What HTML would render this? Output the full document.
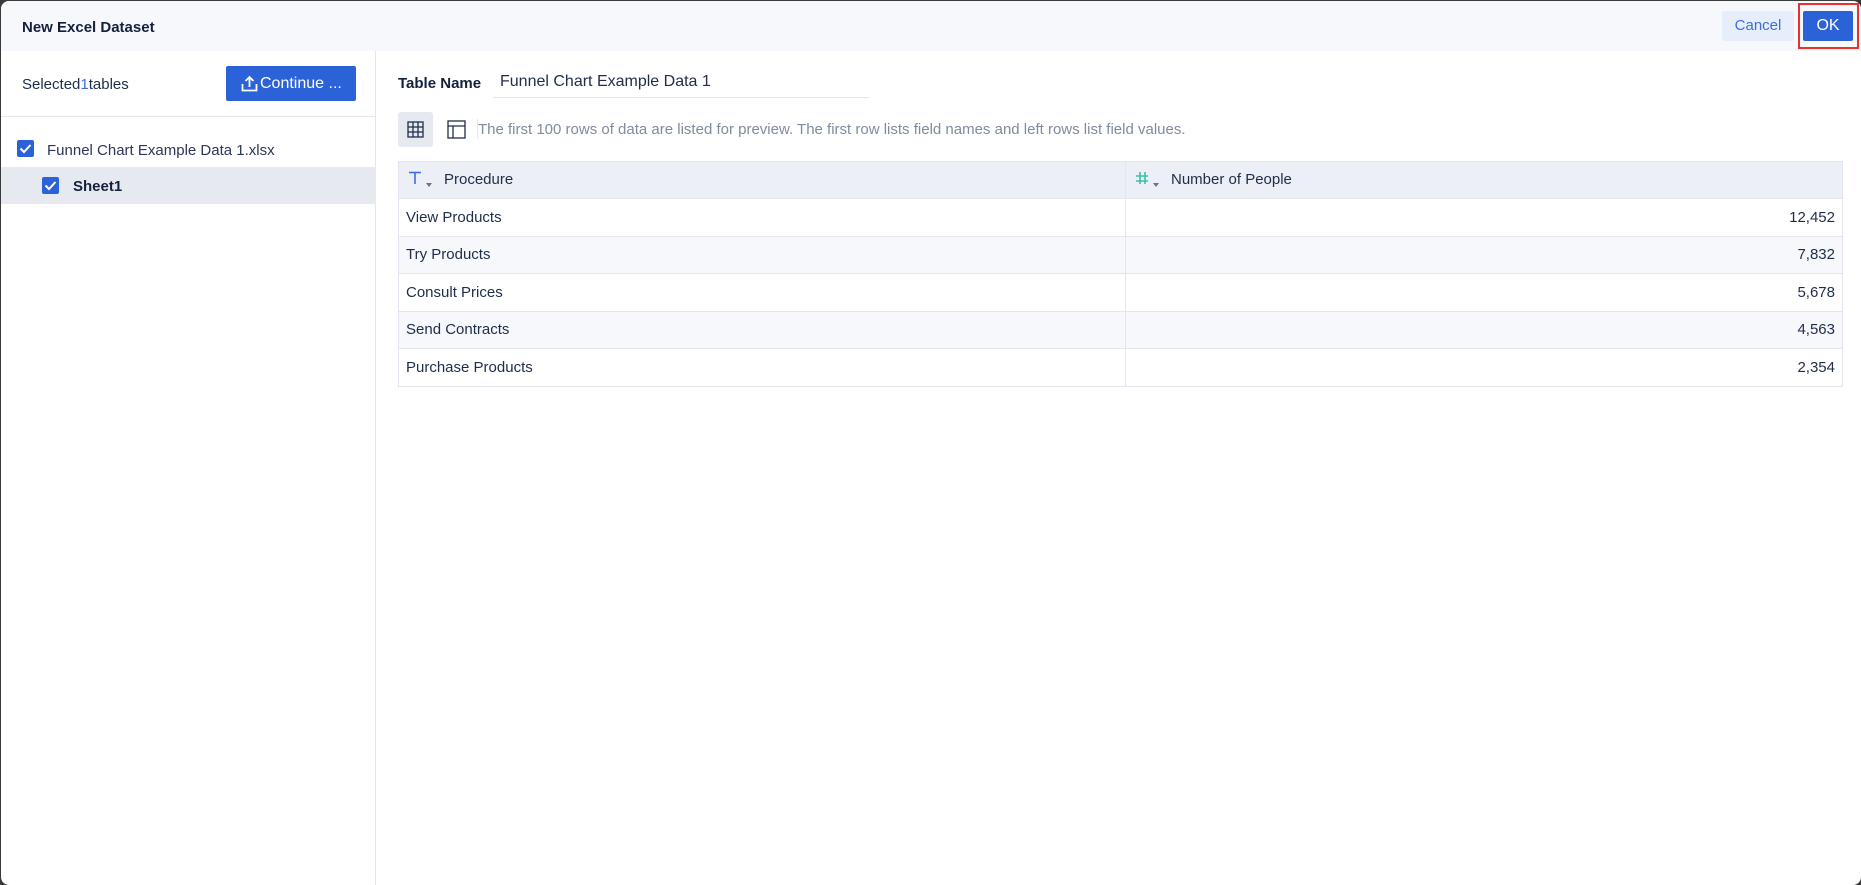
<!DOCTYPE html>
<html><head><meta charset="utf-8"><style>
*{box-sizing:border-box;margin:0;padding:0}
html,body{width:1861px;height:885px;overflow:hidden;background:#3a3a3a;font-family:"Liberation Sans",Arial,sans-serif;color:#1f2d4a}
.dlg{position:absolute;left:1px;top:1px;width:1860px;height:884px;background:#fff;border-radius:8px;overflow:hidden}
.hdr{position:absolute;left:0;top:0;width:100%;height:50px;background:#f6f8fc}
.title{position:absolute;left:21px;top:18px;font-size:15px;font-weight:bold;color:#14213d}
.cancel{position:absolute;left:1721px;top:10px;width:72px;height:30px;background:#e6eefc;color:#3b6fe0;border-radius:2px;font-size:15px;line-height:30px;text-align:center}
.ok{position:absolute;left:1802px;top:10px;width:50px;height:30px;background:#2c62d8;color:#fff;border-radius:2px;font-size:16px;line-height:30px;text-align:center}
.red{position:absolute;left:1797px;top:2px;width:61px;height:46px;border:2px solid #e8312f}
.left{position:absolute;left:0;top:50px;width:375px;height:834px;border-right:1px solid #e3e6ee}
.sel{position:absolute;left:21px;top:25px;font-size:15px;color:#1f2d4a}
.sel b{font-weight:normal;color:#3b6fe0}
.cont{position:absolute;left:225px;top:15px;width:130px;height:35px;background:#2c62d8;border-radius:2px;color:#fff;font-size:16px;line-height:35px;padding-left:34px}
.cont svg{position:absolute;left:15px;top:9px}
.div1{position:absolute;left:0;top:65px;width:375px;height:1px;background:#e3e6ee}
.cb{position:absolute;width:17px;height:17px;background:#2c62d8;border-radius:2px}
.cb svg{position:absolute;left:2px;top:3px}
.r1{position:absolute;left:46px;top:91px;font-size:15px;color:#2b3754}
.srow{position:absolute;left:0;top:116px;width:375px;height:37px;background:#e6e9f0}
.s1{position:absolute;left:72px;top:127px;font-size:15px;font-weight:bold;color:#14213d}
.tn{position:absolute;left:397px;top:74px;font-size:15px;font-weight:bold;color:#14213d}
.inp{position:absolute;left:492px;top:66px;width:376px;height:31px;border-bottom:1px solid #e3e6ee;font-size:16px;padding-left:7px;line-height:30px;color:#1f2d4a}
.gbtn{position:absolute;left:397px;top:111px;width:35px;height:35px;background:#e6e9f0;border-radius:3px}
.hint{position:absolute;left:477px;top:120px;font-size:15px;color:#808aa0}
.vsep{position:absolute;left:476px;top:118px;width:1px;height:20px;background:#e3e6ee}
table{position:absolute;left:397px;top:160px;width:1445px;border-collapse:collapse;font-size:15px}
td{height:37.5px;border:1px solid #e3e6ee;padding:0 7px;color:#1f2d4a}
tr.h td{background:#eceff5;height:37px}
tr:nth-child(odd):not(.h) td{background:#f7f8fc}
td.n{text-align:right}
.ic{display:inline-block;width:38px;position:relative;height:20px;vertical-align:middle}
</style></head><body>
<div class="dlg">
<div class="hdr"><div class="title">New Excel Dataset</div>
<div class="cancel">Cancel</div><div class="ok">OK</div><div class="red"></div></div>
<div class="left">
<div class="sel">Selected<b>1</b>tables</div>
<div class="cont"><svg width="17" height="17" viewBox="0 0 17 17" fill="none" stroke="#fff" stroke-width="1.8"><path d="M8.5 12V2M4.5 6l4-4 4 4M1.5 9v6.5h14V9"/></svg>Continue ...</div>
<div class="div1"></div>
<div class="cb" style="left:16px;top:89px"><svg width="13" height="11" viewBox="0 0 13 11"><path d="M1.5 5.5l3.5 3.5 6.5-7" stroke="#fff" stroke-width="2" fill="none"/></svg></div>
<div class="r1">Funnel Chart Example Data 1.xlsx</div>
<div class="srow"></div>
<div class="cb" style="left:41px;top:126px"><svg width="13" height="11" viewBox="0 0 13 11"><path d="M1.5 5.5l3.5 3.5 6.5-7" stroke="#fff" stroke-width="2" fill="none"/></svg></div>
<div class="s1">Sheet1</div>
</div>
<div class="tn">Table Name</div>
<div class="inp">Funnel Chart Example Data 1</div>
<div class="gbtn"><svg style="position:absolute;left:9px;top:9px" width="17" height="17" viewBox="0 0 17 17" fill="none" stroke="#1f2d4a" stroke-width="1.3"><rect x="1" y="1" width="15" height="15"/><path d="M6 1v15M11 1v15M1 6h15M1 11h15"/></svg></div>
<svg style="position:absolute;left:446px;top:119px" width="19" height="19" viewBox="0 0 19 19" fill="none" stroke="#1f2d4a" stroke-width="1.3"><rect x="1" y="1" width="17" height="17"/><path d="M1 6h17M6 6v12"/></svg>
<div class="vsep"></div>
<div class="hint">The first 100 rows of data are listed for preview. The first row lists field names and left rows list field values.</div>
<table>
<tr class="h"><td style="width:727px"><span class="ic"><svg style="position:absolute;left:2px;top:1px" width="14" height="14" viewBox="0 0 14 14" fill="none" stroke="#3b6fe0" stroke-width="1.6"><path d="M1 1.5h12M7 1.5V13"/></svg><span style="position:absolute;left:20px;top:13px;border:3.5px solid transparent;border-top:4px solid #6b7385"></span></span>Procedure</td><td><span class="ic"><svg style="position:absolute;left:2px;top:1px" width="14" height="14" viewBox="0 0 14 14" fill="none" stroke="#3fbfa8" stroke-width="1.6"><path d="M5 1v12M10 1v12M1 5h12M1 10h12"/></svg><span style="position:absolute;left:20px;top:13px;border:3.5px solid transparent;border-top:4px solid #6b7385"></span></span>Number of People</td></tr>
<tr><td>View Products</td><td class="n">12,452</td></tr>
<tr><td>Try Products</td><td class="n">7,832</td></tr>
<tr><td>Consult Prices</td><td class="n">5,678</td></tr>
<tr><td>Send Contracts</td><td class="n">4,563</td></tr>
<tr><td>Purchase Products</td><td class="n">2,354</td></tr>
</table>
</div>
</body></html>
